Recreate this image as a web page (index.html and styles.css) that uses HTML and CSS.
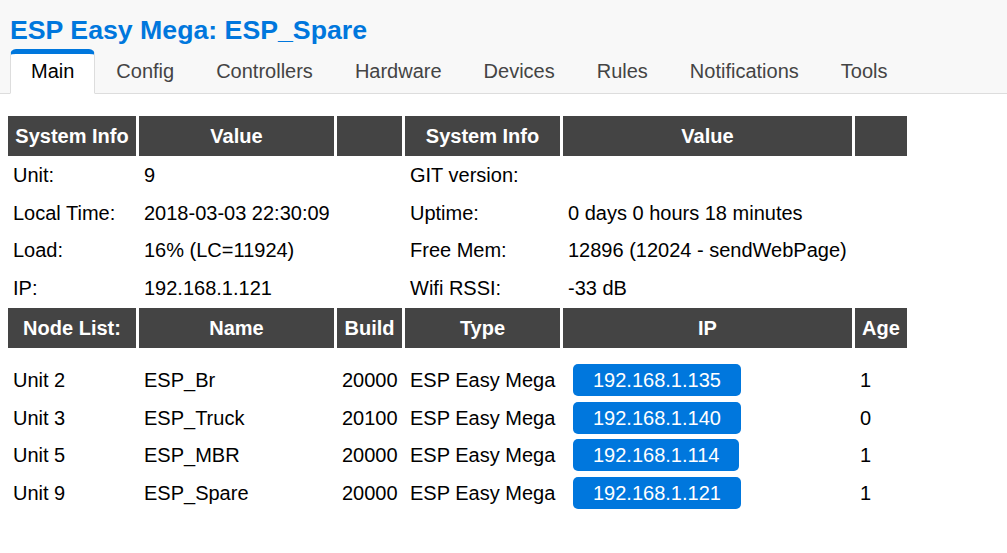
FILE: index.html
```html
<!DOCTYPE html>
<html lang="en">
<head>
  <meta charset="UTF-8">
  <title>ESP Easy Mega: ESP_Spare</title>
  <link rel="stylesheet" href="styles.css">
</head>
<body>
  <header class="headermenu">
    <h1>ESP Easy Mega: ESP_Spare</h1>
    <nav class="menubar">
      <a class="menu active" href="#">Main</a>
      <a class="menu" href="#">Config</a>
      <a class="menu" href="#">Controllers</a>
      <a class="menu" href="#">Hardware</a>
      <a class="menu" href="#">Devices</a>
      <a class="menu" href="#">Rules</a>
      <a class="menu" href="#">Notifications</a>
      <a class="menu" href="#">Tools</a>
    </nav>
  </header>

  <main class="content">
    <table class="normal">
      <colgroup>
        <col class="c1"><col class="c2"><col class="c3"><col class="c4"><col class="c5"><col class="c6">
      </colgroup>
      <tr>
        <th>System Info</th><th>Value</th><th></th><th>System Info</th><th>Value</th><th></th>
      </tr>
      <tr>
        <td>Unit:</td><td>9</td><td></td><td>GIT version:</td><td></td><td></td>
      </tr>
      <tr>
        <td>Local Time:</td><td>2018-03-03 22:30:09</td><td></td><td>Uptime:</td><td>0 days 0 hours 18 minutes</td><td></td>
      </tr>
      <tr>
        <td>Load:</td><td>16% (LC=11924)</td><td></td><td>Free Mem:</td><td>12896 (12024 - sendWebPage)</td><td></td>
      </tr>
      <tr>
        <td>IP:</td><td>192.168.1.121</td><td></td><td>Wifi RSSI:</td><td>-33 dB</td><td></td>
      </tr>
      <tr>
        <th>Node List:</th><th>Name</th><th>Build</th><th>Type</th><th>IP</th><th>Age</th>
      </tr>
      <tr class="spacer"><td colspan="6"></td></tr>
      <tr>
        <td>Unit 2</td><td>ESP_Br</td><td>20000</td><td>ESP Easy Mega</td><td><a class="button" href="#">192.168.1.135</a></td><td>1</td>
      </tr>
      <tr>
        <td>Unit 3</td><td>ESP_Truck</td><td>20100</td><td>ESP Easy Mega</td><td><a class="button" href="#">192.168.1.140</a></td><td>0</td>
      </tr>
      <tr>
        <td>Unit 5</td><td>ESP_MBR</td><td>20000</td><td>ESP Easy Mega</td><td><a class="button" href="#">192.168.1.114</a></td><td>1</td>
      </tr>
      <tr>
        <td>Unit 9</td><td>ESP_Spare</td><td>20000</td><td>ESP Easy Mega</td><td><a class="button" href="#">192.168.1.121</a></td><td>1</td>
      </tr>
    </table>
  </main>
</body>
</html>
```

FILE: styles.css
```css
body {
  margin: 0;
  font-family: "Liberation Sans", Arial, sans-serif;
  font-size: 20px;
  color: #000;
  background: #fff;
}
.headermenu {
  background-color: #f8f8f8;
  border-bottom: 1px solid #ddd;
  padding: 15px 10px 0;
}
h1 {
  font-size: 26.7px;
  line-height: 30px;
  color: #07d;
  margin: 0 0 4px;
  font-weight: bold;
}
.menubar {
  display: flex;
  margin-bottom: -1px;
}
.menu {
  padding: 6px 20px 10px;
  line-height: 23px;
  color: #444;
  white-space: nowrap;
  border: solid transparent;
  border-width: 5px 1px 1px;
  border-radius: 6px 6px 0 0;
  text-decoration: none;
}
.menu.active {
  color: #000;
  background: #fff;
  border-color: #07d #ddd #fff;
}
.content {
  padding: 20px 5px 0;
}
table.normal {
  border-collapse: separate;
  border-spacing: 3px 2px;
  table-layout: fixed;
  width: 905px;
}
col.c1 { width: 128px; }
col.c2 { width: 195px; }
col.c3 { width: 65px; }
col.c4 { width: 155px; }
col.c5 { width: 289px; }
col.c6 { width: 52px; }
th {
  padding: 8px 5px;
  line-height: 24px;
  background-color: #444;
  color: #fff;
  font-weight: bold;
  white-space: nowrap;
}
td {
  padding: 6px 5px;
  line-height: 23.5px;
  text-align: left;
  white-space: nowrap;
}
tr.spacer td {
  padding: 5.5px 0;
  line-height: 0;
}
.button {
  margin: 5px;
  padding: 5px 20px;
  background-color: #07d;
  color: #fff;
  text-decoration: none;
  border-radius: 5px;
}
```
